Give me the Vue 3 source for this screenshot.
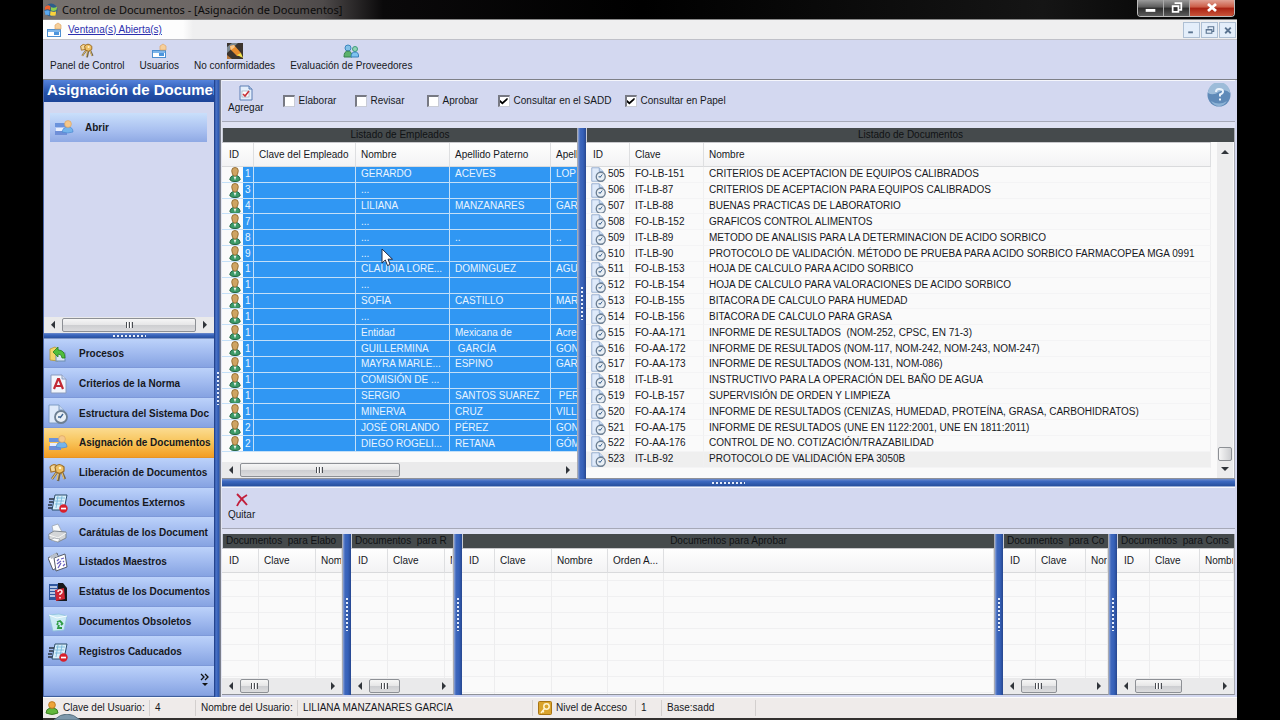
<script setup>
const tools = [
  { icon: 'keys', label: 'Panel de Control' },
  { icon: 'window', label: 'Usuarios' },
  { icon: 'pencil', label: 'No conformidades' },
  { icon: 'people', label: 'Evaluación de Proveedores' },
]
const sections = [
  { icon: 'recycle', label: 'Procesos' },
  { icon: 'letter', label: 'Criterios de la Norma' },
  { icon: 'docclock', label: 'Estructura del Sistema Doc' },
  { icon: 'card', label: 'Asignación de Documentos', active: true },
  { icon: 'keys', label: 'Liberación de Documentos' },
  { icon: 'note', label: 'Documentos Externos' },
  { icon: 'printer', label: 'Carátulas de los Document' },
  { icon: 'sheets', label: 'Listados Maestros' },
  { icon: 'question', label: 'Estatus de los Documentos' },
  { icon: 'bin', label: 'Documentos Obsoletos' },
  { icon: 'note', label: 'Registros Caducados' },
]
const checks = [
  { id: 'elaborar', label: 'Elaborar', on: false },
  { id: 'revisar', label: 'Revisar', on: false },
  { id: 'aprobar', label: 'Aprobar', on: false },
  { id: 'sadd', label: 'Consultar en el SADD', on: true },
  { id: 'papel', label: 'Consultar en Papel', on: true },
]
const employees = [
  ['1', 'GERARDO', 'ACEVES', 'LOP'],
  ['3', '...', '', ''],
  ['4', 'LILIANA', 'MANZANARES', 'GAR'],
  ['7', '...', '', ''],
  ['8', '...', '..', '..'],
  ['9', '...', '', ''],
  ['1', 'CLAUDIA LORE...', 'DOMINGUEZ', 'AGU'],
  ['1', '...', '', ''],
  ['1', 'SOFIA', 'CASTILLO', 'MAR'],
  ['1', '...', '', ''],
  ['1', 'Entidad', 'Mexicana de', 'Acre'],
  ['1', 'GUILLERMINA', ' GARCÍA', 'GON'],
  ['1', 'MAYRA MARLE...', 'ESPINO', 'GAR'],
  ['1', 'COMISIÓN DE ...', '', ''],
  ['1', 'SERGIO', 'SANTOS SUAREZ', ' PER'],
  ['1', 'MINERVA', 'CRUZ', 'VILL'],
  ['2', 'JOSÉ ORLANDO', 'PÉREZ', 'GON'],
  ['2', 'DIEGO ROGELI...', 'RETANA', 'GÓM'],
]
const documents = [
  ['505', 'FO-LB-151', 'CRITERIOS DE ACEPTACION DE EQUIPOS CALIBRADOS'],
  ['506', 'IT-LB-87', 'CRITERIOS DE ACEPTACION PARA EQUIPOS CALIBRADOS'],
  ['507', 'IT-LB-88', 'BUENAS PRACTICAS DE LABORATORIO'],
  ['508', 'FO-LB-152', 'GRAFICOS CONTROL ALIMENTOS'],
  ['509', 'IT-LB-89', 'METODO DE ANALISIS PARA LA DETERMINACION DE ACIDO SORBICO'],
  ['510', 'IT-LB-90', 'PROTOCOLO DE VALIDACIÓN. MÉTODO DE PRUEBA PARA ACIDO SORBICO FARMACOPEA MGA 0991'],
  ['511', 'FO-LB-153', 'HOJA DE CALCULO PARA ACIDO SORBICO'],
  ['512', 'FO-LB-154', 'HOJA DE CALCULO PARA VALORACIONES DE ACIDO SORBICO'],
  ['513', 'FO-LB-155', 'BITACORA DE CALCULO PARA HUMEDAD'],
  ['514', 'FO-LB-156', 'BITACORA DE CALCULO PARA GRASA'],
  ['515', 'FO-AA-171', 'INFORME DE RESULTADOS  (NOM-252, CPSC, EN 71-3)'],
  ['516', 'FO-AA-172', 'INFORME DE RESULTADOS (NOM-117, NOM-242, NOM-243, NOM-247)'],
  ['517', 'FO-AA-173', 'INFORME DE RESULTADOS (NOM-131, NOM-086)'],
  ['518', 'IT-LB-91', 'INSTRUCTIVO PARA LA OPERACIÓN DEL BAÑO DE AGUA'],
  ['519', 'FO-LB-157', 'SUPERVISIÓN DE ORDEN Y LIMPIEZA'],
  ['520', 'FO-AA-174', 'INFORME DE RESULTADOS (CENIZAS, HUMEDAD, PROTEÍNA, GRASA, CARBOHIDRATOS)'],
  ['521', 'FO-AA-175', 'INFORME DE RESULTADOS (UNE EN 1122:2001, UNE EN 1811:2011)'],
  ['522', 'FO-AA-176', 'CONTROL DE NO. COTIZACIÓN/TRAZABILIDAD'],
  ['523', 'IT-LB-92', 'PROTOCOLO DE VALIDACIÓN EPA 3050B'],
]
const queues = [
  { title: 'Documentos  para Elabo', thumb: 34, cols: ['ID', 'Clave', 'Nom'], kind: 'wide' },
  { title: 'Documentos  para R', thumb: 47, cols: ['ID', 'Clave', 'N'], kind: 'wide' },
  { title: 'Documentos para Aprobar', thumb: 0, cols: ['ID', 'Clave', 'Nombre', 'Orden A...', ''], kind: 'full' },
  { title: 'Documentos  para Co', thumb: 52, cols: ['ID', 'Clave', 'Nor'], kind: 'slim' },
  { title: 'Documentos  para Cons', thumb: 58, cols: ['ID', 'Clave', 'Nombr'], kind: 'slim' },
]
</script>

<template>
  <svg class="defs" aria-hidden="true">
    <symbol id="flag" viewBox="0 0 14 14">
      <circle cx="7" cy="7" r="6.5" fill="#2b5d8c" />
      <path d="M1 4q2.500-3 5.500-.5l-.6 3.500q-2-1.500-5.300 0z" fill="#f0622c" />
      <path d="M7.200 4q2 1.400 6-.2l-.8 3.500q-3.500 1.300-5.700-.1z" fill="#8fd14f" />
      <path d="M.500 8q3.200-1.500 5.200 0l-.5 4.300q-2-1.200-3.700-.2z" fill="#5aa9f0" />
      <path d="M6.500 8q2.200 1.400 5.800.2l-.8 4.200q-3.500 1-5.500-.2z" fill="#fbd23c" />
    </symbol>
    <symbol id="card" viewBox="0 0 20 20">
      <rect x="1" y="5" width="12" height="4" fill="#6b93dc" />
      <rect x="2" y="10" width="7" height="3" fill="#e8eefc" />
      <rect x="1" y="13" width="12" height="4" fill="#6f8fd8" />
      <path d="M8 14q1-5 6-5t5 5q-5 2-11 0z" fill="#74b4ec" stroke="#4682cc" stroke-width=".6" />
      <circle cx="14" cy="6" r="3.400" fill="#f4c78a" stroke="#d9a05c" stroke-width=".6" />
    </symbol>
    <symbol id="window" viewBox="0 0 16 16">
      <rect x="1.500" y="7.500" width="13" height="7" fill="#fff" stroke="#4d8fd0" />
      <rect x="2" y="8" width="12" height="2" fill="#7fb6ea" />
      <rect x="8" y="10" width="5" height="3" fill="#4c95dd" />
      <path d="M9 7V3l3-2 3 2v4z" fill="#f6cf9a" stroke="#dfa869" stroke-width=".7" />
    </symbol>
    <symbol id="keys" viewBox="0 0 20 20">
      <path d="M9 9l-5 7M12 8l-2 10M13 7l4 9" stroke="#6f6450" stroke-width="2.400" fill="none" />
      <path d="M9 9l-5 7M11 8l-2 9M13 7l3 9" stroke="#e6c069" stroke-width="1.200" fill="none" />
      <path d="M2 4q3-4 7-1l-1 5-5 1z" fill="#f3d79b" stroke="#a8762a" stroke-width="1.200" />
      <path d="M7 4q4-5 9 0l0 4q-4 4-8 1z" fill="#eec063" stroke="#9b6c24" stroke-width="1.200" />
      <circle cx="12" cy="5" r="1.300" fill="#fff3d0" />
    </symbol>
    <symbol id="pencil" viewBox="0 0 16 16">
      <rect width="16" height="16" fill="#3c342e" />
      <path d="M0 4l5-4h6L0 10z" fill="#7b8790" />
      <path d="M3 3l4-1 7 8-1 3-3 0-7-7z" fill="#e88d2e" />
      <path d="M3 3l4-1 1 2-4 3z" fill="#f6c58a" />
      <path d="M10 12l4-2 2 5z" fill="#f0e24c" />
      <path d="M0 12l5 4H0z" fill="#b9793f" />
    </symbol>
    <symbol id="people" viewBox="0 0 16 16">
      <circle cx="5" cy="5" r="3" fill="#83c1e8" stroke="#3b86bf" />
      <circle cx="12" cy="6" r="2.500" fill="#8fd3b4" stroke="#3e9c7a" />
      <path d="M1 14q0-6 4-6t4 6z" fill="#5cb26a" stroke="#35804c" />
      <path d="M8 14q0-5 4-5t3.500 5z" fill="#7fc3f0" stroke="#397fbc" />
    </symbol>
    <symbol id="recycle" viewBox="0 0 20 20">
      <path d="M2 5l5-2 3 2v12l-8-1z" fill="#f2d66b" stroke="#b59834" stroke-width=".8" />
      <rect x="8" y="9" width="9" height="8" fill="#d7e6f4" stroke="#6c8db0" />
      <path d="M5 8l5-5v3q7 0 7 8l-3 0q0-4-4-4v3z" fill="#4fbf3b" stroke="#267d1d" stroke-width=".8" />
    </symbol>
    <symbol id="letter" viewBox="0 0 20 20">
      <path d="M3 1h11l4 4v14H3z" fill="#f1f5fc" stroke="#8b9cbf" />
      <path d="M14 1v4h4" fill="#cfdaf0" stroke="#8b9cbf" />
      <path d="M6 15l4-10h1l4 10M7 12h6" fill="none" stroke="#c22a35" stroke-width="2.200" />
    </symbol>
    <symbol id="docclock" viewBox="0 0 20 20">
      <path d="M1 1h10l5 5v13H1z" fill="#dfeafa" stroke="#7f9cc4" />
      <path d="M11 1v5h5" fill="#c7d8ef" stroke="#7f9cc4" />
      <circle cx="13" cy="13" r="6" fill="#e9eff5" stroke="#6d7f92" stroke-width="1.800" />
      <path d="M12 14l3-4M10 13h3" stroke="#3f6592" stroke-width="1.300" />
    </symbol>
    <symbol id="note" viewBox="0 0 20 20">
      <path d="M7 2h12l-3 15H4z" fill="#d8effb" stroke="#2d4e6d" />
      <path d="M8 5h9M7 8h9M7 11h8M10 3L8 15M14 3l-2 12" stroke="#6fb2d8" stroke-width=".8" />
      <path d="M1 6h5M1 9h4M0 12h4M0 15h4" stroke="#2a3442" stroke-width="1.300" />
      <circle cx="15.500" cy="15.500" r="4.200" fill="#d8202c" />
      <rect x="13" y="14.700" width="5" height="1.700" fill="#fff" />
    </symbol>
    <symbol id="printer" viewBox="0 0 20 20">
      <path d="M4 3l6-2 4 8-8 3z" fill="#f8fafc" stroke="#9aa5b3" stroke-width=".8" />
      <path d="M1 11l5-3 12 1v6l-8 4-9-3z" fill="#d4d6d8" stroke="#7f8790" />
      <path d="M1 12l9 3 8-5" fill="none" stroke="#f6f6f6" />
      <path d="M6 15l6 1-2 3-7-2z" fill="#fdfdfd" stroke="#979ea8" stroke-width=".7" />
    </symbol>
    <symbol id="sheets" viewBox="0 0 20 20">
      <path d="M0 6l9-5 4 12-8 5z" fill="#fff" stroke="#555b68" />
      <path d="M6 6l11-4 2 13-11 4z" fill="#fff" stroke="#555b68" />
      <path d="M9 9l2-2M13 7l3-1M9 12l4-3M15 9l1 1M10 16l3-5M15 14l2-2" stroke="#675fc0" stroke-width="1.300" />
      <path d="M2 4l6-3 2 3-7 3z" fill="#b9bfc9" />
    </symbol>
    <symbol id="question" viewBox="0 0 20 20">
      <path d="M10 1h5l4 5v13H8z" fill="#16181c" />
      <rect x="1" y="2" width="9" height="16" fill="#2f579f" />
      <path d="M2 5h7M2 8h7M2 11h5M2 14h5" stroke="#dfe9fa" stroke-width="1.300" />
      <path d="M7 8l9-2 1 11-9 2z" fill="#cf2634" />
      <path d="M10 10q0-2 2-2t2 2q0 1-2 2v1M12 15v1.500" stroke="#ffe9ea" stroke-width="1.500" fill="none" />
    </symbol>
    <symbol id="bin" viewBox="0 0 20 20">
      <path d="M1 3l10-1 8 2-3 14-11 1z" fill="#cdeaf5" stroke="#8ec3dc" stroke-width=".8" />
      <path d="M1 3l8 3 10-2" fill="none" stroke="#f7fdff" />
      <path d="M9 10l3-1 2 2M15 11l-2 2M14 16l-4 0 1-3M9 13l1-2" stroke="#2e9c45" stroke-width="1.800" fill="none" />
    </symbol>
    <symbol id="person" viewBox="0 0 12 16">
      <path d="M.500 13q.5-3 3.500-4h4q3 1 3.500 4-.5 2.500-5.500 2.500T.500 13z" fill="#3c9a68" stroke="#1f5f3e" />
      <path d="M2.500 4q0-3.500 3.500-3.500T9.500 4q0 5-3.500 6Q2.500 9 2.500 4z" fill="#cfa463" stroke="#8d6629" stroke-width=".9" />
      <path d="M4.500 10.500h3L6 14z" fill="#e8f2ec" />
    </symbol>
    <symbol id="user" viewBox="0 0 14 14">
      <path d="M1 12q0-4 4-5h4q4 1 4 5-6 3-12 0z" fill="#62b83c" stroke="#3c8020" />
      <circle cx="7" cy="4" r="3.400" fill="#eea53a" stroke="#b5701a" stroke-width=".8" />
    </symbol>
    <symbol id="add" viewBox="0 0 14 16">
      <path d="M1 1h9l3 3v11H1z" fill="#e4eefb" stroke="#5c7fb4" />
      <path d="M10 1v3h3" fill="#b7cdec" stroke="#5c7fb4" />
      <rect x="3" y="6" width="7" height="6" fill="#fff" stroke="#9ba9bb" stroke-width=".7" />
      <path d="M4 9l2 2 4-5" fill="none" stroke="#c8323a" stroke-width="1.600" />
    </symbol>
    <symbol id="key" viewBox="0 0 14 14">
      <rect x=".5" y=".5" width="13" height="13" rx="1" fill="#d9a32c" stroke="#a87413" />
      <circle cx="8.500" cy="5.500" r="2.700" fill="none" stroke="#fff4cf" stroke-width="1.500" />
      <path d="M7 7l-4 5M4 10l2 1" stroke="#fff4cf" stroke-width="1.500" />
    </symbol>
  </svg>

  <div class="screen">
    <div class="window">
      <header class="titlebar">
        <svg class="i14"><use href="#flag" /></svg>
        <h1>Control de Documentos - [Asignación de Documentos]</h1>
        <div class="winbtns">
          <button aria-label="Minimizar"><svg viewBox="0 0 26 16"><rect x="8" y="9" width="10" height="3" fill="#fff" /></svg></button>
          <button aria-label="Restaurar"><svg viewBox="0 0 26 16"><path d="M11 3h7v7h-2M9 6h6v6H9z" fill="none" stroke="#fff" stroke-width="1.800" /></svg></button>
          <button class="close" aria-label="Cerrar"><svg viewBox="0 0 44 16"><path d="M18 4l8 7M26 4l-8 7" stroke="#fff" stroke-width="2.800" /></svg></button>
        </div>
      </header>

      <nav class="menubar">
        <svg class="i16"><use href="#window" /></svg>
        <a href="#">Ventana(s) Abierta(s)</a>
        <div class="mdi">
          <button aria-label="Minimizar ventana"><svg viewBox="0 0 15 15"><path d="M4 10h5" stroke="#5a7390" stroke-width="2" /></svg></button>
          <button aria-label="Restaurar ventana"><svg viewBox="0 0 15 15"><path d="M6 6V4h6v5h-2M4 7h6v4H4zM4 7.500h6" fill="none" stroke="#5a7390" stroke-width="1.200" /></svg></button>
          <button aria-label="Cerrar ventana"><svg viewBox="0 0 15 15"><path d="M5 5l6 6M11 5l-6 6" stroke="#5a7390" stroke-width="2" /></svg></button>
        </div>
      </nav>

      <div class="toolbar">
        <button v-for="t in tools" :key="t.label" class="tool">
          <svg class="i16"><use :href="'#' + t.icon" /></svg>{{ t.label }}
        </button>
      </div>

      <div class="body">
        <aside class="sidebar">
          <h2>Asignación de Documentos</h2>
          <div class="tasks">
            <button class="open"><svg class="i20"><use href="#card" /></svg>Abrir</button>
          </div>
          <div class="hscroll">
            <i class="arrow left"></i><div class="track"><span class="thumb full"><b></b></span></div><i class="arrow right"></i>
          </div>
          <div class="split row thin"><i></i></div>
          <ul class="sections">
            <li v-for="s in sections" :key="s.label">
              <button :class="{ active: s.active }"><svg class="i20"><use :href="'#' + s.icon" /></svg><span>{{ s.label }}</span></button>
            </li>
            <li class="more">
              <button aria-label="Más opciones"><svg viewBox="0 0 10 14" width="10" height="14"><path d="M1 1l3 3-3 3M5 1l3 3-3 3" fill="none" stroke="#111" stroke-width="1.300" /><path d="M2 10h6l-3 3z" fill="#111" /></svg></button>
            </li>
          </ul>
        </aside>
        <div class="split col outer"><i></i></div>

        <main class="main">
          <div class="actions">
            <button class="tool add"><svg class="i16"><use href="#add" /></svg>Agregar</button>
            <div class="checks">
              <label v-for="c in checks" :key="c.id" :for="c.id"><input :id="c.id" type="checkbox" :checked="c.on" />{{ c.label }}</label>
            </div>
            <button class="help" aria-label="Ayuda"><svg viewBox="0 0 24 24"><circle cx="12" cy="12" r="11.500" fill="#5f8ab8" /><path d="M1 10a11 11 0 0 1 22 0q-5-5-11-1T1 10z" fill="#9dbcd9" /><path d="M4 18q8 5 16 0-3 5-8 5t-8-5z" fill="#8db3d6" /><path d="M9 9q0-3 3-3 4 0 4 2.500 0 2-3 3v2M13 15.500v2" fill="none" stroke="#e9f2fb" stroke-width="2" /></svg></button>
          </div>

          <div class="top">
            <section class="pane">
              <h3>Listado de Empleados</h3>
              <div class="view">
                <table class="emp">
                  <colgroup><col class="w32" /><col class="w102" /><col class="w94" /><col class="w101" /><col class="w94" /></colgroup>
                  <thead><tr><th>ID</th><th>Clave del Empleado</th><th>Nombre</th><th>Apellido Paterno</th><th>Apell</th></tr></thead>
                  <tbody>
                    <tr v-for="(e, n) in employees" :key="n">
                      <td class="idcell"><div><svg><use href="#person" /></svg><span>{{ e[0] }}</span></div></td>
                      <td></td><td>{{ e[1] }}</td><td>{{ e[2] }}</td><td>{{ e[3] }}</td>
                    </tr>
                  </tbody>
                </table>
              </div>
              <div class="hscroll"><i class="arrow left"></i><div class="track"><span class="thumb" :style="{ width: '50%' }"><b></b></span></div><i class="arrow right"></i></div>
            </section>
            <div class="split col"><i></i></div>
            <section class="pane">
              <h3>Listado de Documentos</h3>
              <div class="docs">
                <div class="view">
                  <table class="doc">
                    <colgroup><col class="w44" /><col class="w74" /><col /></colgroup>
                    <thead><tr><th>ID</th><th>Clave</th><th>Nombre</th></tr></thead>
                    <tbody>
                      <tr v-for="d in documents" :key="d[0]">
                        <td class="idcell"><div><svg><use href="#docclock" /></svg><span>{{ d[0] }}</span></div></td>
                        <td>{{ d[1] }}</td><td>{{ d[2] }}</td>
                      </tr>
                    </tbody>
                  </table>
                </div>
                <div class="vscroll"><i class="arrow up"></i><span class="vthumb"></span><i class="arrow down"></i></div>
              </div>
            </section>
          </div>

          <div class="split row"><i></i></div>
          <div class="actions lower">
            <button class="tool"><svg class="i16" viewBox="0 0 16 16"><path d="M3 2q5 5 10 11M13 3Q6 7 3 14" fill="none" stroke="#c21f3c" stroke-width="1.900" /></svg>Quitar</button>
          </div>

          <div class="bottom">
            <template v-for="(q, n) in queues" :key="n">
              <div v-if="n" class="split col"><i></i></div>
              <section class="pane">
                <h3 :class="{ clipped: q.thumb }">{{ q.title }}</h3>
                <div class="view grid">
                  <table :class="['queue', q.kind]">
                    <thead><tr><th v-for="c in q.cols" :key="c">{{ c }}</th></tr></thead>
                    <tbody><tr><td v-for="c in q.cols" :key="c"></td></tr></tbody>
                  </table>
                </div>
                <div v-if="q.thumb" class="hscroll"><i class="arrow left"></i><div class="track"><span class="thumb" :style="{ width: q.thumb + '%' }"><b></b></span></div><i class="arrow right"></i></div>
              </section>
            </template>
          </div>
        </main>
      </div>

      <footer class="status">
        <span class="s1"><svg class="i14"><use href="#user" /></svg>Clave del Usuario:</span>
        <span class="s2">4</span>
        <span class="s3">Nombre del Usuario:</span>
        <span class="s4">LILIANA MANZANARES GARCIA</span>
        <span class="s5"><svg class="i14"><use href="#key" /></svg>Nivel de Acceso</span>
        <span class="s6">1</span>
        <span class="s7">Base:sadd</span>
      </footer>
      <div class="taskbar"></div>
    </div>
    <svg class="orb" viewBox="0 0 26 6"><path d="M0 6q13-12 26 0z" fill="#7d98ab" stroke="#56707f" /></svg>
    <svg class="cursor" viewBox="0 0 13 19"><path d="M1 1v14l3.300-3 2.200 5.500 2.600-1L7 11.200h4.500z" fill="#fff" stroke="#222a44" /></svg>
  </div>
</template>

<style>
html, body { margin: 0; background: #000; }
</style>

<style scoped>
* { box-sizing: border-box; }
button { font: inherit; color: inherit; border: 0; background: none; padding: 0; margin: 0; }
h1, h2, h3, ul { margin: 0; padding: 0; font-weight: normal; }
svg { display: block; flex: none; }
.defs { position: absolute; width: 0; height: 0; }
.i14 { width: 14px; height: 14px; }
.i16 { width: 16px; height: 16px; }
.i20 { width: 20px; height: 20px; }
.screen { position: relative; height: 100vh; min-height: 600px; padding: 0 43px; background: #000; overflow: hidden; font: 10px/14px "Liberation Sans", Arial, sans-serif; color: #16181d; }
.window { height: 100%; display: flex; flex-direction: column; background: #d3d7ef; }

.titlebar { display: flex; align-items: center; gap: 4px; height: 20px; padding-left: 1px; background: linear-gradient(90deg, #77726f 0, #6b6563 180px, #4e4a4a 280px, #0a090a 340px, #000 600px, #151515 1000px, #000); border-bottom: 1px solid #888; }
.titlebar h1 { flex: 1; font: 11px/18px "Noto Sans", sans-serif; color: #0b0b0b; white-space: nowrap; }
.winbtns { display: flex; align-self: flex-start; height: 17px; margin-right: 2px; border: 1px solid #bdbdbd; border-top: 0; border-radius: 0 0 4px 4px; overflow: hidden; }
.winbtns button { width: 26px; background: linear-gradient(#9a9a9a, #5a5a5a 45%, #2c2c2c 50%, #5c5c5c); border-right: 1px solid #aaa; }
.winbtns .close { width: 44px; border: 0; background: linear-gradient(#e0a193, #cb5b45 45%, #a92212 50%, #c9543a); }
.winbtns svg { width: 100%; height: 16px; }

.menubar { display: flex; align-items: center; height: 20px; gap: 6px; padding: 0 1px 0 3px; background: linear-gradient(90deg, #fdfdfd 140px, #efeff0 150px); border-bottom: 1px solid #bfc0c8; }
.menubar a { color: #2b2fae; }
.mdi { display: flex; gap: 1px; margin-left: auto; }
.mdi button { width: 17px; height: 16px; background: #e4eefa; border: 1px solid #aebfd3; }
.mdi svg { width: 15px; height: 14px; }

.toolbar { display: flex; gap: 15px; height: 40px; padding: 3px 7px; border-bottom: 1px solid #7e8087; background: #d3d8f0; }
.tool { display: flex; flex-direction: column; align-items: center; white-space: nowrap; }

.body { flex: 1; min-height: 0; display: flex; }
.sidebar { width: 171px; flex: none; display: flex; flex-direction: column; border-left: 1px solid #4a66a8; background: #d3d8f0; min-height: 0; }
.sidebar h2 { flex: none; height: 22px; padding-left: 3px; overflow: hidden; white-space: nowrap; background: linear-gradient(#5583dc, #2450a8 60%, #1c4498); color: #fff; font: bold 15px/20px "Liberation Sans", sans-serif; }
.tasks { flex: 215 1 0; }
.open { display: flex; align-items: center; gap: 11px; width: 157px; height: 29px; margin: 11px 6px; padding-left: 4px; background: linear-gradient(#c9dffb, #a9c0f0 60%, #8fa9e4); font-weight: bold; }
.sections { flex: 358 1 0; min-height: 0; display: flex; flex-direction: column; list-style: none; border-bottom: 1px solid #3f5f9d; }
.sections li { flex: 1 1 0; min-height: 0; }
.sections button { display: flex; align-items: center; gap: 11px; width: 100%; height: 100%; padding: 1px 0 0 4px; overflow: hidden; text-align: left; white-space: nowrap; font-weight: bold; background: linear-gradient(#bcd2fa, #a3bcf0 45%, #86a3e2 96%, #7791d2); }
.sections button.active { background: linear-gradient(#fbdc92, #f8c55c 45%, #f39e24 96%, #d98c2a); }
.sections .more button { justify-content: flex-end; padding: 0 4px 2px 0; }

.split { display: flex; align-items: center; justify-content: center; }
.split.col { background: linear-gradient(90deg, #8fa5d6 0, #3f68bd 2px, #3560b8 5px, #27478f); }
.split.outer { width: 8px; flex: none; background: linear-gradient(90deg, #16347c 0, #4b74c8 2px, #2a55ad 5px, #7b7f8c 6px, #7b7f8c 7px, #e3e6f3 7px); }
.split.row { height: 8px; flex: none; background: linear-gradient(#6f8dcc, #3c68c0 30%, #27509f 85%, #e8ebf6); }
.split.row.thin { height: 6px; }
.split i { display: block; }
.split.col i { width: 2px; height: 33px; background: repeating-linear-gradient(#e6edfb 0 2px, #35589f 2px 4px); }
.split.row i { height: 2px; width: 33px; background: repeating-linear-gradient(90deg, #e6edfb 0 2px, #35589f 2px 4px); }

.main { flex: 1; min-width: 0; display: flex; flex-direction: column; padding: 0 2px 2px 0; }
.actions { flex: none; display: flex; height: 48px; padding: 4px 4px 6px 6px; border-top: 1px solid #f5f6fc; background: linear-gradient(#d3d8f0 40px, #a6a9b8 40px 41px, #dfe2f3 41px); }
.lower { height: 47px; }
.checks { display: grid; grid-template-columns: 72px 72px 71px 127px auto; align-items: center; margin-left: 19px; height: 31px; }
.checks label { display: flex; align-items: center; gap: 4px; white-space: nowrap; }
.checks input { flex: none; appearance: none; position: relative; width: 12px; height: 12px; margin: 0; background: #fff; border: 1px solid #c9ccd6; border-top: 2px solid #777983; border-left: 2px solid #777983; }
.checks input:checked::before { content: ""; position: absolute; left: 0; top: 1px; width: 8px; height: 7px; background: #000; clip-path: polygon(0 30%, 35% 65%, 100% 0, 100% 32%, 35% 100%, 0 65%); }
.help { margin-left: auto; width: 24px; height: 24px; margin-top: -2px; }

.top { flex: 351 1 0; min-height: 0; display: grid; grid-template-columns: minmax(0, 356fr) 8px minmax(0, 649fr); }
.bottom { flex: 161 1 0; min-height: 0; display: grid; grid-template-columns: minmax(0, 121fr) 8px minmax(0, 103fr) 8px minmax(0, 533fr) 8px minmax(0, 106fr) 8px minmax(0, 118fr); }
.pane { display: flex; flex-direction: column; min-height: 0; min-width: 0; background: #fafafa; border-bottom: 1px solid #8e9199; border-right: 1px solid #a9abb3; }
.pane h3 { flex: none; height: 14px; overflow: hidden; background: #454a4c; color: #101214; text-align: center; white-space: pre; font-size: 10px; border-left: 1px solid #c9ccd6; }
.pane h3.clipped { text-align: left; padding-left: 3px; }
.view { flex: 1; min-width: 0; min-height: 0; overflow: hidden; border-top: 1px solid #c8c8cc; }
.docs { flex: 1; min-height: 0; display: flex; }

table { border-collapse: separate; border-spacing: 0; table-layout: fixed; }
th { height: 24px; padding: 1px 0 0 5px; text-align: left; font-weight: normal; white-space: nowrap; overflow: hidden; border-right: 1px solid #dedfe1; border-bottom: 1px solid #d9dadc; background: linear-gradient(#fefefe, #f3f3f4); }
th:first-child { padding-left: 7px; }
td { padding: 0 0 0 5px; white-space: pre; overflow: hidden; }
.w32 { width: 32px; }
.w44 { width: 44px; }
.w74 { width: 74px; }
.w94 { width: 94px; }
.w101 { width: 101px; }
.w102 { width: 102px; }
.emp { width: 423px; height: 309px; }
.emp td { background: #3097f3; color: #e8f4ff; border-right: 1px solid #c4e0f8; border-bottom: 1px solid #c4e0f8; }
td.idcell { padding: 0; }
.emp td.idcell { background: linear-gradient(90deg, #fafafa 21px, #3097f3 21px); }
.idcell div { display: flex; align-items: center; height: 14px; }
.emp .idcell svg { width: 12px; height: 15px; margin: 0 4px 0 7px; }
.doc .idcell svg { width: 15px; height: 15px; margin: 0 2px 0 5px; }
.doc { width: 100%; height: 325px; }
.doc td { border-right: 1px solid #f0f0f1; border-bottom: 1px solid #f4f4f5; }
.doc tbody tr:last-child td { background: #efefef; }
.queue { width: 100%; height: 100%; }
.queue td { border-right: 1px solid #ededee; }
.queue th:nth-child(1) { width: 37px; }
.queue th:nth-child(2) { width: 57px; }
.queue.full th:nth-child(1), .queue.slim th:nth-child(1) { width: 33px; }
.queue.slim th:nth-child(2) { width: 50px; }
.queue.full th:nth-child(3), .queue.full th:nth-child(4) { width: 56px; }
.grid { background: repeating-linear-gradient(#fafafa 0 15px, #f0f0f1 15px 16px); }

.hscroll { flex: none; display: flex; align-items: center; height: 16px; background: #eaeaeb; }
.track { flex: 1; display: flex; height: 14px; }
.thumb { display: flex; align-items: center; justify-content: center; height: 14px; border: 1px solid #8d9095; border-radius: 2px; background: linear-gradient(#f6f6f6, #e6e6e7 50%, #cdced1 52%, #dcdcde); }
.thumb.full { width: 100%; }
.thumb b { width: 7px; height: 6px; background: repeating-linear-gradient(90deg, #4a4d52 0 1px, #fff 1px 2px, #d8d8da 2px 3px); }
.arrow { flex: none; width: 18px; height: 14px; background: #30343a; clip-path: polygon(7px 7px, 11px 3px, 11px 11px); }
.arrow.right { clip-path: polygon(11px 7px, 7px 3px, 7px 11px); }
.vscroll { flex: none; width: 16px; margin: 0 1px 0 6px; display: flex; flex-direction: column; align-items: center; background: #ececed; }
.arrow.up { width: 14px; clip-path: polygon(7px 6px, 11px 10px, 3px 10px); margin: 2px 0 auto; }
.arrow.down { width: 14px; clip-path: polygon(7px 10px, 11px 6px, 3px 6px); margin-bottom: 3px; }
.vthumb { width: 14px; height: 14px; border: 1px solid #8d9095; border-radius: 2px; background: linear-gradient(90deg, #f6f6f6, #cdced1); }

.status { flex: none; display: flex; align-items: center; height: 21px; background: #efebea; border-top: 1px solid #fbfbfb; white-space: nowrap; }
.status span { display: flex; align-items: center; gap: 4px; height: 16px; border-right: 1px solid #d3cfce; padding-left: 5px; }
.status .s1 { width: 107px; padding-left: 2px; }
.s2 { width: 46px; }
.s3 { width: 102px; }
.s4 { width: 235px; }
.s5 { width: 103px; }
.s6 { width: 26px; }
.s7 { width: 94px; }
.taskbar { flex: none; height: 2px; background: #33302f; }
.orb { position: absolute; left: 54px; bottom: 0; width: 26px; height: 6px; }
.cursor { position: absolute; left: 381px; top: 248px; width: 13px; height: 19px; }
</style>
